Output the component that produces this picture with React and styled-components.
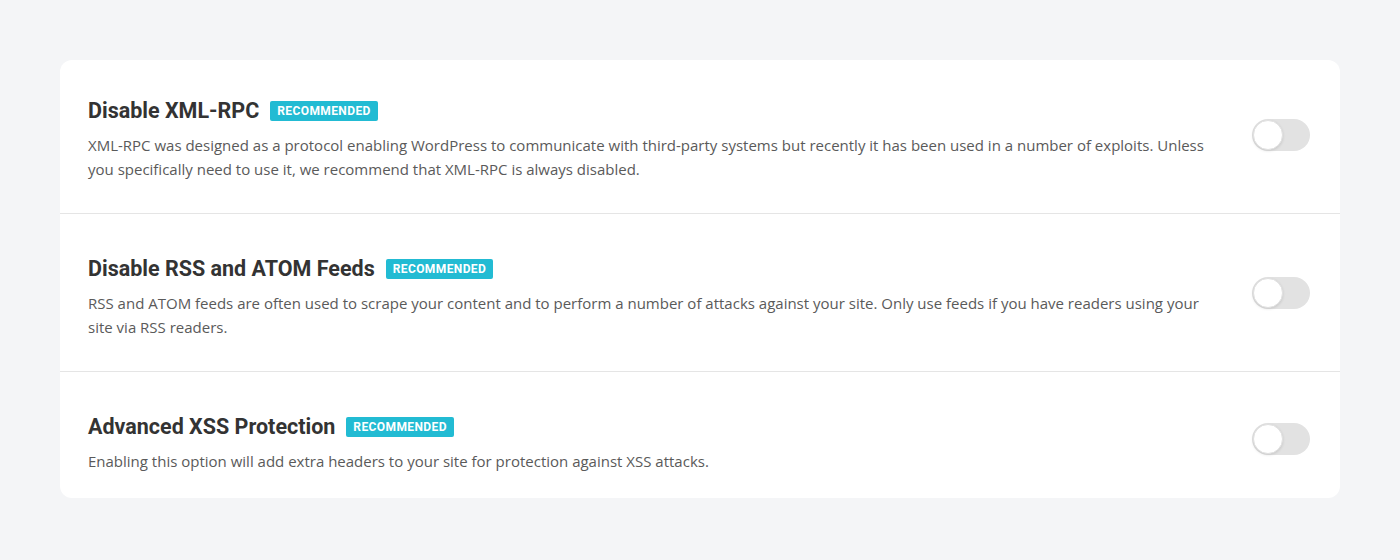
import React, { useState } from 'react';
import { styled, createGlobalStyle } from 'styled-components';

const GlobalStyle = createGlobalStyle`
  html, body {
    margin: 0;
    padding: 0;
    background-color: #f4f5f7;
  }
`;

const settings = [
  {
    id: 'xmlrpc',
    title: 'Disable XML-RPC',
    text: 'XML-RPC was designed as a protocol enabling WordPress to communicate with third-party systems but recently it has been used in a number of exploits. Unless you specifically need to use it, we recommend that XML-RPC is always disabled.',
  },
  {
    id: 'feeds',
    title: 'Disable RSS and ATOM Feeds',
    text: 'RSS and ATOM feeds are often used to scrape your content and to perform a number of attacks against your site. Only use feeds if you have readers using your site via RSS readers.',
  },
  {
    id: 'xss',
    title: 'Advanced XSS Protection',
    text: 'Enabling this option will add extra headers to your site for protection against XSS attacks.',
  },
];

function App() {
  const [values, setValues] = useState({});

  return (
    <Page>
      <GlobalStyle />
      <Card>
        {settings.map((item) => (
          <Row key={item.id}>
            <Info>
              <Heading>
                <Title>{item.title}</Title>
                <Badge>Recommended</Badge>
              </Heading>
              <Description>{item.text}</Description>
            </Info>
            <Toggle
              type="button"
              $on={!!values[item.id]}
              onClick={() => setValues({ ...values, [item.id]: !values[item.id] })}
            >
              <Knob $on={!!values[item.id]} />
            </Toggle>
          </Row>
        ))}
      </Card>
    </Page>
  );
}

const Page = styled.div`
  min-height: 560px;
  padding: 60px;
  box-sizing: border-box;
`;

const Card = styled.div`
  background-color: #ffffff;
  border-radius: 12px;
  overflow: hidden;
`;

const Row = styled.div`
  display: flex;
  align-items: center;
  justify-content: space-between;
  gap: 30px;
  padding: 40px 30px 32px 28px;
  border-bottom: 1px solid #e5e5e5;

  &:first-child {
    padding-top: 36px;
  }

  &:last-child {
    border-bottom: none;
    padding-bottom: 25px;
  }
`;

const Info = styled.div`
  flex: 1;
  min-width: 0;
`;

const Heading = styled.div`
  display: flex;
  align-items: center;
  gap: 11px;
  height: 30px;
`;

const Title = styled.h3`
  margin: 0;
  color: #333333;
  font-family: Roboto, 'Liberation Sans', sans-serif;
  font-size: 21.5px;
  font-weight: 700;
  line-height: 30px;
`;

const Badge = styled.span`
  display: inline-block;
  padding: 0 7px;
  height: 20px;
  line-height: 20px;
  border-radius: 2px;
  background-color: #22bbd3;

  color: #ffffff;
  font-family: Roboto, 'Liberation Sans', sans-serif;
  font-size: 12px;
  font-weight: 700;
  letter-spacing: 0.4px;
  text-transform: uppercase;
`;

const Description = styled.p`
  margin: 7px 0 0;
  color: #5a5a5a;
  font-family: 'Open Sans', 'Liberation Sans', sans-serif;
  font-size: 15px;
  line-height: 24px;
`;

const Toggle = styled.button`
  position: relative;
  flex: none;
  width: 58px;
  height: 32px;
  margin-bottom: 8px;
  padding: 0;
  border: none;
  border-radius: 16px;
  background-color: ${({ $on }) => ($on ? '#22bbd3' : '#e2e2e2')};
  cursor: pointer;
`;

const Knob = styled.span`
  position: absolute;
  top: 1px;
  left: ${({ $on }) => ($on ? '27px' : '1px')};
  width: 30px;
  height: 30px;
  box-sizing: border-box;
  border-radius: 50%;
  border: 1px solid #e0e0e0;
  background-color: #ffffff;
  box-shadow: 0 1px 3px rgba(0, 0, 0, 0.12);
`;

export default App;
